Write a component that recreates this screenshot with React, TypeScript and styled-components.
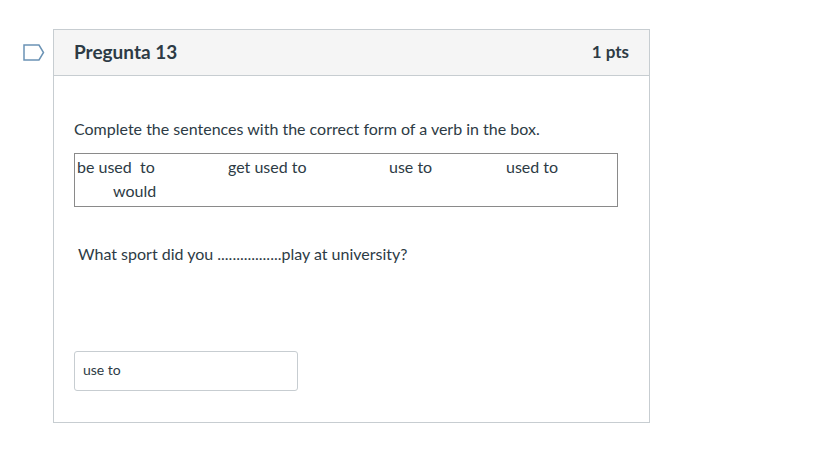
import React from "react";
import styled, { createGlobalStyle } from "styled-components";

const Global = createGlobalStyle`
  html, body { margin: 0; padding: 0; background: #fff; }
  body { font-family: Lato, "Noto Sans", sans-serif; color: #2d3b45; }
`;

const Page = styled.div`
  display: flex;
  align-items: flex-start;
  padding: 29px 0 0 23px;
`;

const FlagCol = styled.div`
  width: 30px;
  padding-top: 15px;
`;

const Card = styled.div`
  width: 595px;
  height: 392px;
  border: 1px solid #c7cdd1;
  display: flex;
  flex-direction: column;
`;

const Header = styled.div`
  height: 46px;
  background: #f5f5f5;
  border-bottom: 1px solid #c7cdd1;
  display: flex;
  align-items: center;
  justify-content: space-between;
  padding: 0 20px;
  box-sizing: border-box;
  flex-shrink: 0;
`;

const Title = styled.div`
  font-weight: 700;
  font-size: 19px;
  margin-top: -2px;
`;

const Points = styled.div`
  font-weight: 700;
  font-size: 17px;
  margin-top: -2px;
`;

const Body = styled.div`
  padding: 43px 20px 0 20px;
  display: flex;
  flex-direction: column;
`;

const Instruction = styled.p`
  margin: 0;
  font-size: 16px;
  line-height: 20px;
`;

const WordBox = styled.div`
  margin-top: 14px;
  width: 544px;
  height: 54px;
  box-sizing: border-box;
  border: 1px solid #8a8a8a;
  display: grid;
  grid-template-columns: 151px 161px 117px 1fr;
  grid-auto-rows: 24px;
  padding: 1px 0 0 2px;
  font-size: 16px;
`;

const Word = styled.span<{ $indent?: number }>`
  padding-left: ${(p) => p.$indent ?? 0}px;
  white-space: pre;
  line-height: 24px;
`;

const Question = styled.p`
  margin: 37px 0 0 4px;
  font-size: 16px;
  line-height: 20px;
`;

const Answer = styled.div`
  margin-top: 87px;
  width: 224px;
  height: 40px;
  box-sizing: border-box;
  border: 1px solid #c7cdd1;
  border-radius: 3px;
  display: flex;
  align-items: center;
  padding: 0 0 3px 8px;
  font-size: 14px;
  color: #2d3b45;
`;

const Flag = () => (
  <svg width="22" height="17" viewBox="0 0 22 17">
    <path
      d="M1 1 H16 L20.5 8.5 L16 16 H1 Z"
      fill="none"
      stroke="#6b93b5"
      strokeWidth="1.5"
      strokeLinejoin="miter"
    />
  </svg>
);

export default function App() {
  return (
    <>
      <Global />
      <Page>
        <FlagCol>
          <Flag />
        </FlagCol>
        <Card>
          <Header>
            <Title>Pregunta 13</Title>
            <Points>1 pts</Points>
          </Header>
          <Body>
            <Instruction>
              Complete the sentences with the correct form of a verb in the box.
            </Instruction>
            <WordBox>
              <Word>be used  to</Word>
              <Word>get used to</Word>
              <Word>use to</Word>
              <Word>used to</Word>
              <Word $indent={36}>would</Word>
            </WordBox>
            <Question>
              What sport did you .................play at university?
            </Question>
            <Answer>use to</Answer>
          </Body>
        </Card>
      </Page>
    </>
  );
}
